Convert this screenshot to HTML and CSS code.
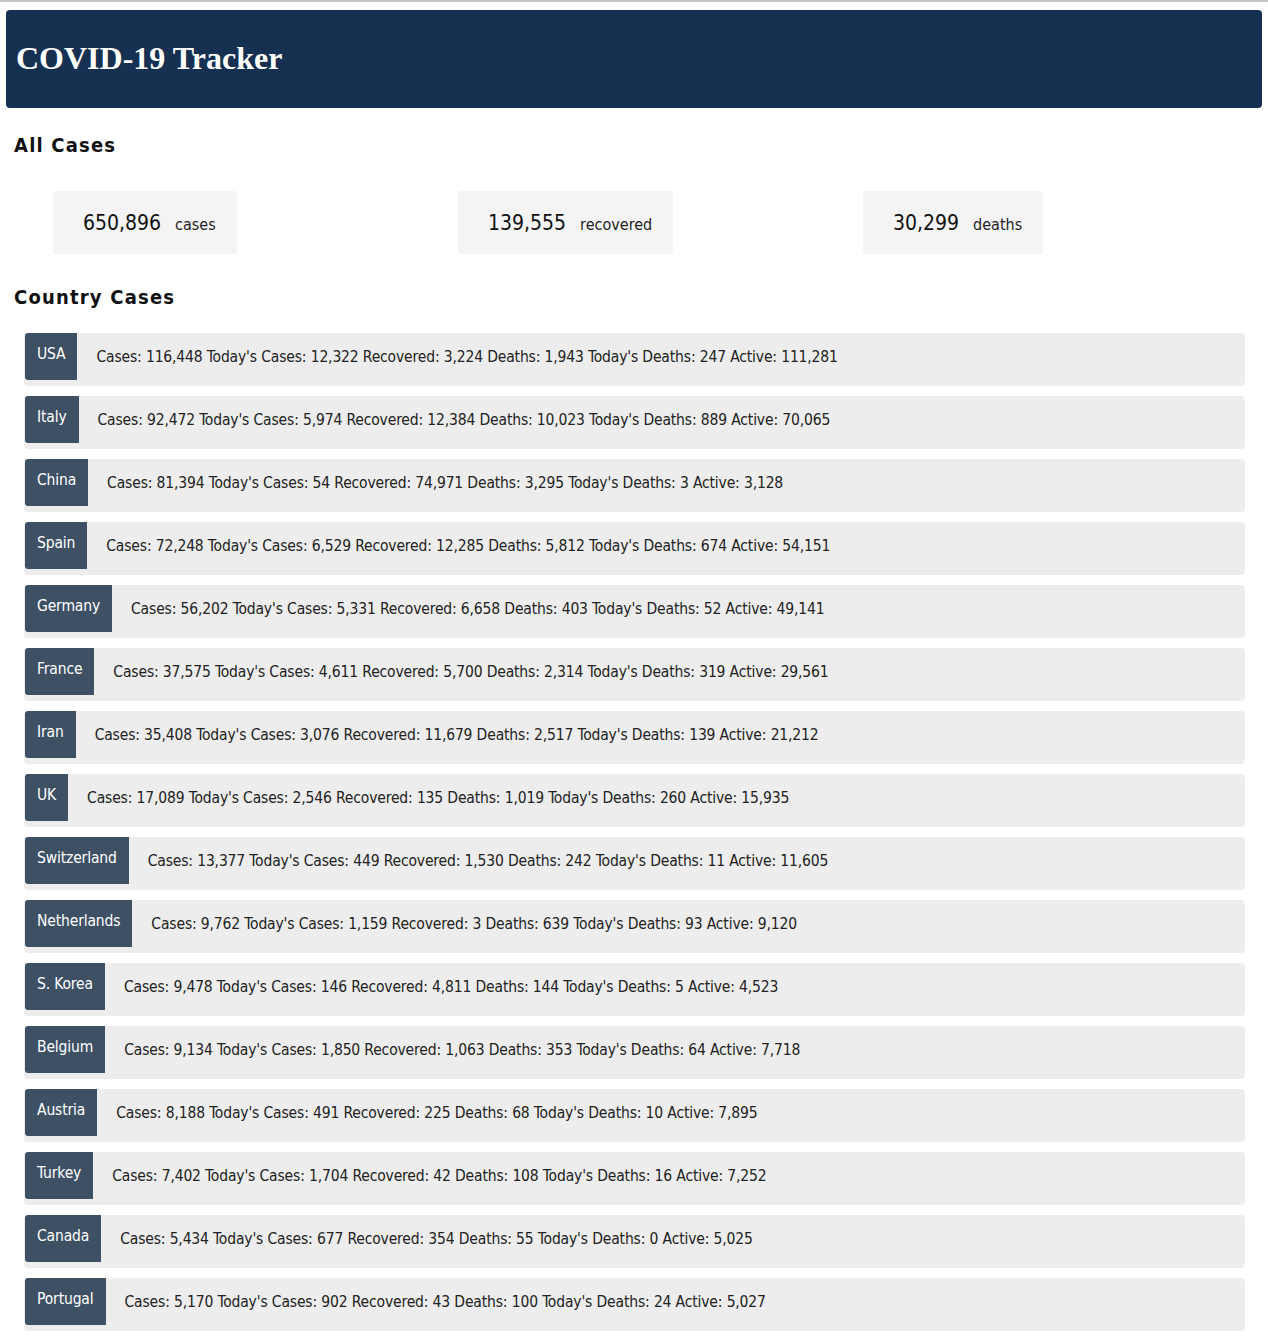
FILE: index.html
```html
<!DOCTYPE html>
<html>
<head>
<meta charset="utf-8">
<link rel="stylesheet" href="styles.css">
</head>
<body>
<div class="topline"></div>
<header class="header"><h1 class="title">COVID-19 Tracker</h1></header>
<h2 class="section-title">All Cases</h2>
<div class="stats">
  <div class="stat"><span class="stat-num">650,896</span><span class="stat-label">cases</span></div>
  <div class="stat"><span class="stat-num">139,555</span><span class="stat-label">recovered</span></div>
  <div class="stat"><span class="stat-num">30,299</span><span class="stat-label">deaths</span></div>
</div>
<h2 class="section-title country-title">Country Cases</h2>
<div class="list">
  <div class="row"><span class="badge">USA</span><span class="info">Cases: 116,448 Today's Cases: 12,322 Recovered: 3,224 Deaths: 1,943 Today's Deaths: 247 Active: 111,281</span></div>
  <div class="row"><span class="badge">Italy</span><span class="info">Cases: 92,472 Today's Cases: 5,974 Recovered: 12,384 Deaths: 10,023 Today's Deaths: 889 Active: 70,065</span></div>
  <div class="row"><span class="badge">China</span><span class="info">Cases: 81,394 Today's Cases: 54 Recovered: 74,971 Deaths: 3,295 Today's Deaths: 3 Active: 3,128</span></div>
  <div class="row"><span class="badge">Spain</span><span class="info">Cases: 72,248 Today's Cases: 6,529 Recovered: 12,285 Deaths: 5,812 Today's Deaths: 674 Active: 54,151</span></div>
  <div class="row"><span class="badge">Germany</span><span class="info">Cases: 56,202 Today's Cases: 5,331 Recovered: 6,658 Deaths: 403 Today's Deaths: 52 Active: 49,141</span></div>
  <div class="row"><span class="badge">France</span><span class="info">Cases: 37,575 Today's Cases: 4,611 Recovered: 5,700 Deaths: 2,314 Today's Deaths: 319 Active: 29,561</span></div>
  <div class="row"><span class="badge">Iran</span><span class="info">Cases: 35,408 Today's Cases: 3,076 Recovered: 11,679 Deaths: 2,517 Today's Deaths: 139 Active: 21,212</span></div>
  <div class="row"><span class="badge">UK</span><span class="info">Cases: 17,089 Today's Cases: 2,546 Recovered: 135 Deaths: 1,019 Today's Deaths: 260 Active: 15,935</span></div>
  <div class="row"><span class="badge">Switzerland</span><span class="info">Cases: 13,377 Today's Cases: 449 Recovered: 1,530 Deaths: 242 Today's Deaths: 11 Active: 11,605</span></div>
  <div class="row"><span class="badge">Netherlands</span><span class="info">Cases: 9,762 Today's Cases: 1,159 Recovered: 3 Deaths: 639 Today's Deaths: 93 Active: 9,120</span></div>
  <div class="row"><span class="badge">S. Korea</span><span class="info">Cases: 9,478 Today's Cases: 146 Recovered: 4,811 Deaths: 144 Today's Deaths: 5 Active: 4,523</span></div>
  <div class="row"><span class="badge">Belgium</span><span class="info">Cases: 9,134 Today's Cases: 1,850 Recovered: 1,063 Deaths: 353 Today's Deaths: 64 Active: 7,718</span></div>
  <div class="row"><span class="badge">Austria</span><span class="info">Cases: 8,188 Today's Cases: 491 Recovered: 225 Deaths: 68 Today's Deaths: 10 Active: 7,895</span></div>
  <div class="row"><span class="badge">Turkey</span><span class="info">Cases: 7,402 Today's Cases: 1,704 Recovered: 42 Deaths: 108 Today's Deaths: 16 Active: 7,252</span></div>
  <div class="row"><span class="badge">Canada</span><span class="info">Cases: 5,434 Today's Cases: 677 Recovered: 354 Deaths: 55 Today's Deaths: 0 Active: 5,025</span></div>
  <div class="row"><span class="badge">Portugal</span><span class="info">Cases: 5,170 Today's Cases: 902 Recovered: 43 Deaths: 100 Today's Deaths: 24 Active: 5,027</span></div>
</div>
</body>
</html>
```

FILE: styles.css
```css
html, body {
  margin: 0;
  padding: 0;
  background: #fff;
}
body {
  font-family: "DejaVu Sans Condensed", "Liberation Sans", sans-serif;
  color: #111;
  overflow: hidden;
}
.topline {
  height: 2px;
  background: #c8c8c8;
}
.header {
  margin: 8px 6px 0 6px;
  height: 98px;
  background: #163052;
  border-radius: 4px;
  display: flex;
  align-items: center;
  padding: 0 10px;
}
.title {
  margin: 0 0 2px 0;
  font-family: "Liberation Serif", serif;
  font-weight: bold;
  font-size: 32px;
  color: #fff;
}
.section-title {
  margin: 22px 0 0 14px;
  font-size: 20px;
  font-weight: bold;
  letter-spacing: 1.2px;
  line-height: 30px;
  color: #111;
}
.stats {
  display: grid;
  grid-template-columns: repeat(3, 405px);
  padding-left: 53px;
  margin-top: 31px;
}
.stat {
  justify-self: start;
  background: #f4f4f4;
  border-radius: 3px;
  height: 63px;
  padding: 0 21px 0 30px;
  display: flex;
  align-items: center;
}
.stat-num {
  font-size: 21px;
  color: #111;
}
.stat-label {
  font-size: 16px;
  margin-left: 14px;
  padding-top: 4px;
  color: #222;
}
.country-title {
  margin-top: 28px;
}
.list {
  display: flex;
  flex-direction: column;
  gap: 10px;
  margin: 21px 23px 0 24px;
}
.row {
  display: flex;
  align-items: flex-start;
  height: 53px;
  background: #ededed;
  border-radius: 4px;
}
.badge {
  height: 47px;
  background: #3e5064;
  color: #fff;
  border-radius: 3px 0 0 3px;
  margin-left: 1px;
  padding: 12px 12px 0 12px;
  box-sizing: border-box;
  font-size: 15.5px;
  letter-spacing: -0.15px;
}
.info {
  margin-left: 19px;
  padding-top: 15px;
  font-size: 15.5px;
  letter-spacing: -0.15px;
  color: #222;
}
```
